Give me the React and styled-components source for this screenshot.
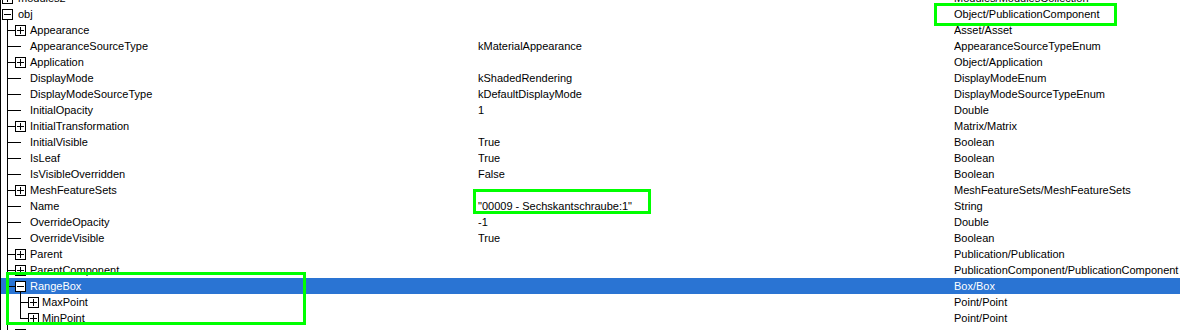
import React from "react";
import styled, { createGlobalStyle } from "styled-components";

const Global = createGlobalStyle`
  html, body { margin: 0; padding: 0; background: #fff; overflow: hidden; }
  body { font-family: "Liberation Sans", Arial, sans-serif; }
`;

const Page = styled.div`
  position: relative;
  width: 1180px;
  height: 330px;
  overflow: hidden;
  background: #fff;
`;

const List = styled.div`
  display: flex;
  flex-direction: column;
  margin-top: -10px;
`;

const Row = styled.div`
  display: flex;
  align-items: stretch;
  height: 16px;
  line-height: 16px;
  font-size: 11px;
  color: ${(p) => (p.$selected ? "#fff" : "#000")};
  background: ${(p) => (p.$selected ? "#2a74d3" : "transparent")};
  white-space: nowrap;
`;

const NameCell = styled.div`
  display: flex;
  align-items: stretch;
  width: 478px;
  flex: none;
`;

const ValueCell = styled.div`
  width: 476px;
  flex: none;
  overflow: hidden;
`;

const TypeCell = styled.div`
  flex: 1;
  overflow: hidden;
`;

const Label = styled.span`
  display: block;
`;

const Glyph = styled.svg`
  flex: none;
  display: block;
`;

const Mark = styled.div`
  position: absolute;
  border: 3px solid #00ff00;
  box-sizing: border-box;
  pointer-events: none;
`;

const cx = (d) => 7 + 13 * d;
const textX = (d) => 18 + 12 * d;

function TreeGlyph({ depth, kind, guides = [], last, expanded }) {
  const w = textX(depth);
  const c = cx(depth);
  const parts = [];
  parts.push(<line key="edge" x1={0.5} y1={0} x2={0.5} y2={16} stroke="#000" />);
  guides.forEach((g, i) =>
    parts.push(<line key={"g" + i} x1={g + 0.5} y1={0} x2={g + 0.5} y2={16} stroke="#000" />)
  );
  if (depth > 0) {
    const p = cx(depth - 1);
    parts.push(
      <line key="v" x1={p + 0.5} y1={0} x2={p + 0.5} y2={last ? 9 : 16} stroke="#000" />
    );
    parts.push(
      <line key="h" x1={p} y1={8.5} x2={kind === "leaf" ? c + 1 : c - 5} y2={8.5} stroke="#000" />
    );
  }
  if (kind !== "leaf") {
    if (expanded) {
      parts.push(<line key="down" x1={c + 0.5} y1={13} x2={c + 0.5} y2={16} stroke="#000" />);
    }
    parts.push(
      <rect key="box" x={c - 5 + 0.5} y={3.5} width={10} height={10} fill="#fff" stroke="#000" />
    );
    parts.push(<line key="m" x1={c - 3} y1={8.5} x2={c + 4} y2={8.5} stroke="#000" />);
    if (kind === "plus") {
      parts.push(<line key="p" x1={c + 0.5} y1={5} x2={c + 0.5} y2={12} stroke="#000" />);
    }
  }
  return (
    <Glyph width={w} height={16} viewBox={`0 0 ${w} 16`} shapeRendering="crispEdges">
      {parts}
    </Glyph>
  );
}

const rows = [
  { name: "modules2", value: "", type: "Modules/ModulesCollection", depth: 0, kind: "plus" },
  { name: "obj", value: "", type: "Object/PublicationComponent", depth: 0, kind: "minus", expanded: true },
  { name: "Appearance", value: "", type: "Asset/Asset", depth: 1, kind: "plus" },
  { name: "AppearanceSourceType", value: "kMaterialAppearance", type: "AppearanceSourceTypeEnum", depth: 1, kind: "leaf" },
  { name: "Application", value: "", type: "Object/Application", depth: 1, kind: "plus" },
  { name: "DisplayMode", value: "kShadedRendering", type: "DisplayModeEnum", depth: 1, kind: "leaf" },
  { name: "DisplayModeSourceType", value: "kDefaultDisplayMode", type: "DisplayModeSourceTypeEnum", depth: 1, kind: "leaf" },
  { name: "InitialOpacity", value: "1", type: "Double", depth: 1, kind: "leaf" },
  { name: "InitialTransformation", value: "", type: "Matrix/Matrix", depth: 1, kind: "plus" },
  { name: "InitialVisible", value: "True", type: "Boolean", depth: 1, kind: "leaf" },
  { name: "IsLeaf", value: "True", type: "Boolean", depth: 1, kind: "leaf" },
  { name: "IsVisibleOverridden", value: "False", type: "Boolean", depth: 1, kind: "leaf" },
  { name: "MeshFeatureSets", value: "", type: "MeshFeatureSets/MeshFeatureSets", depth: 1, kind: "plus" },
  { name: "Name", value: "\"00009 - Sechskantschraube:1\"", type: "String", depth: 1, kind: "leaf" },
  { name: "OverrideOpacity", value: "-1", type: "Double", depth: 1, kind: "leaf" },
  { name: "OverrideVisible", value: "True", type: "Boolean", depth: 1, kind: "leaf" },
  { name: "Parent", value: "", type: "Publication/Publication", depth: 1, kind: "plus" },
  { name: "ParentComponent", value: "", type: "PublicationComponent/PublicationComponent", depth: 1, kind: "plus" },
  { name: "RangeBox", value: "", type: "Box/Box", depth: 1, kind: "minus", expanded: true, selected: true },
  { name: "MaxPoint", value: "", type: "Point/Point", depth: 2, kind: "plus", guides: [7] },
  { name: "MinPoint", value: "", type: "Point/Point", depth: 2, kind: "plus", guides: [7], last: true },
  { name: "ReferencedDocumentDescriptor", value: "", type: "DocumentDescriptor/DocumentDescriptor", depth: 1, kind: "plus" },
];

export default function App() {
  return (
    <>
      <Global />
      <Page>
        <List>
          {rows.map((r, i) => (
            <Row key={i} $selected={r.selected}>
              <NameCell>
                <TreeGlyph
                  depth={r.depth}
                  kind={r.kind}
                  guides={r.guides}
                  last={r.last}
                  expanded={r.expanded}
                />
                <Label>{r.name}</Label>
              </NameCell>
              <ValueCell>{r.value}</ValueCell>
              <TypeCell>{r.type}</TypeCell>
            </Row>
          ))}
        </List>
        <Mark style={{ left: 934, top: 3, width: 183, height: 23 }} />
        <Mark style={{ left: 473, top: 189, width: 178, height: 25 }} />
        <Mark style={{ left: 6, top: 272, width: 300, height: 53 }} />
      </Page>
    </>
  );
}
